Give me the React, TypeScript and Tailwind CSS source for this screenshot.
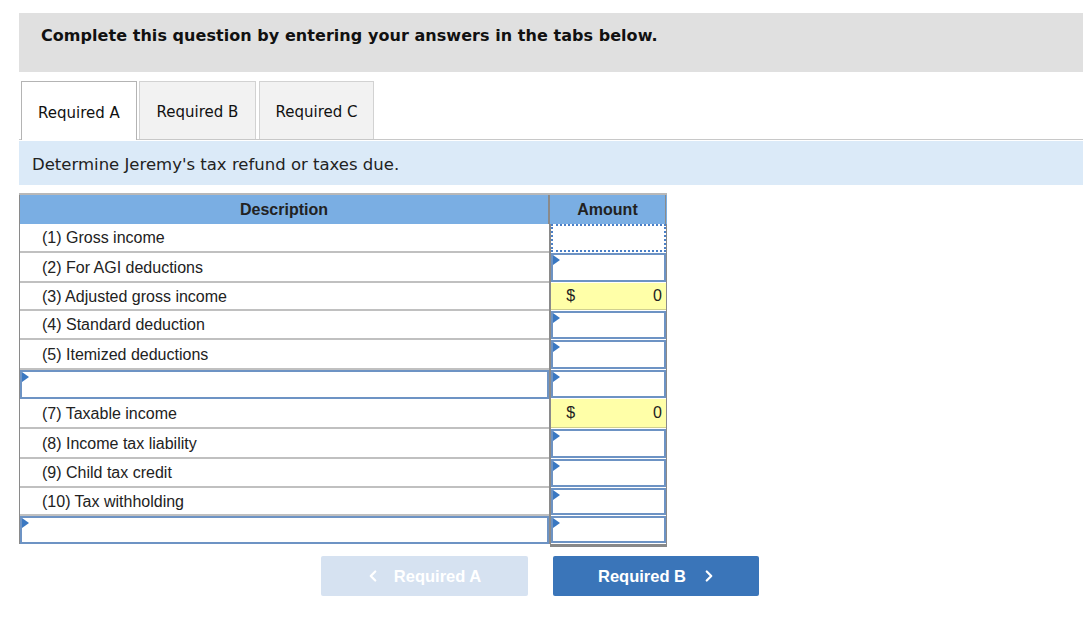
import React from "react";
import { ChevronLeft, ChevronRight } from "lucide-react";

type Row = { label?: string; amount: "input" | "focus" | "calc"; descInput?: boolean; h: string };

const rows: Row[] = [
  { label: "(1) Gross income", amount: "focus", h: "h-[29px]" },
  { label: "(2) For AGI deductions", amount: "input", h: "h-[30px]" },
  { label: "(3) Adjusted gross income", amount: "calc", h: "h-[28px]" },
  { label: "(4) Standard deduction", amount: "input", h: "h-[29px]" },
  { label: "(5) Itemized deductions", amount: "input", h: "h-[30px]" },
  { descInput: true, amount: "input", h: "h-[29px]" },
  { label: "(7) Taxable income", amount: "calc", h: "h-[30px]" },
  { label: "(8) Income tax liability", amount: "input", h: "h-[30px]" },
  { label: "(9) Child tax credit", amount: "input", h: "h-[29px]" },
  { label: "(10) Tax withholding", amount: "input", h: "h-[28px]" },
  { descInput: true, amount: "input", h: "h-[28px]" },
];

function Flag() {
  return <span className="absolute left-0 top-0 h-0 w-0 border-y-[5px] border-l-[7px] border-y-transparent border-l-[#3a78c2]" />;
}

function InputBox() {
  return (
    <div className="relative h-full w-full border-2 border-[#6d93c4] bg-white">
      <Flag />
    </div>
  );
}

function AmountCell({ kind }: { kind: Row["amount"] }) {
  if (kind === "focus") {
    return <div className="h-full w-full border-2 border-dotted border-[#4a7fc6] bg-white" />;
  }
  if (kind === "calc") {
    return (
      <div className="flex h-full w-full items-center justify-between border-b border-[#cfcf90] bg-[#ffffa8] pl-[15px] pr-[4px] text-[16px] text-[#222]">
        <span>$</span>
        <span>0</span>
      </div>
    );
  }
  return <InputBox />;
}

export default function App() {
  return (
    <div className="min-h-[623px] bg-white pt-[13px] pl-[19px] pr-[4px] font-['DejaVu_Sans',Verdana,sans-serif] text-[#111]">
      <div className="h-[59px] bg-[#e0e0e0] pl-[22px] pt-[11px] text-[16px] font-bold tracking-[0.05px]">
        Complete this question by entering your answers in the tabs below.
      </div>

      <div className="mt-[9px] flex h-[59px] items-end gap-[2px] border-b border-[#c8c8c8] pl-[2px]">
        <div className="-mb-px flex h-[59px] w-[116px] items-center justify-center border border-b-0 border-[#b4b4b4] bg-white pt-[4px] text-[15px]">
          Required A
        </div>
        <div className="flex h-[58px] w-[117px] items-center justify-center border border-b-0 border-[#d2d2d2] bg-[#f2f2f2] pt-[4px] text-[15px]">
          Required B
        </div>
        <div className="ml-[1px] flex h-[58px] w-[115px] items-center justify-center border border-b-0 border-[#d2d2d2] bg-[#f2f2f2] pt-[4px] text-[15px]">
          Required C
        </div>
      </div>

      <div className="mt-[1px] flex h-[44px] items-center bg-[#dbeaf8] pl-[13px] pt-[4px] text-[16.5px] text-[#222]">
        Determine Jeremy's tax refund or taxes due.
      </div>

      <div className="mt-[8px] w-[648px] font-['Liberation_Sans',Arial,sans-serif] text-[16px] text-[#222]">
        <div className="flex h-[31px] border-t-2 border-[#b8b8b8] bg-[#7aaee3] font-bold text-[#222]">
          <div className="flex w-[531px] items-center justify-center border-l border-r-2 border-[#8a8a8a]">Description</div>
          <div className="flex w-[116px] items-center justify-center border-r border-[#8a8a8a]">Amount</div>
        </div>
        {rows.map((r, i) => (
          <div key={i} className={`flex ${r.h} border-l border-[#8a8a8a]`}>
            <div className={`w-[530px] ${r.descInput ? "" : "border-b-2 border-[#c0c0c0]"}`}>
              {r.descInput ? (
                <InputBox />
              ) : (
                <div className="flex h-full items-center pl-[22px] pt-[1px]">{r.label}</div>
              )}
            </div>
            <div className="w-[118px] border-l-2 border-r border-[#8a8a8a] bg-white pb-[1px]">
              <AmountCell kind={r.amount} />
            </div>
          </div>
        ))}
        <div className="ml-[531px] h-[3px] w-[117px] bg-[#888]" />
      </div>

      <div className="mt-[9px] flex gap-[25px] pl-[302px] font-['Liberation_Sans',Arial,sans-serif] text-[16.5px] font-bold text-white">
        <div className="flex h-[40px] w-[207px] items-center justify-center gap-[12px] rounded-[2px] bg-[#d6e2f1] pr-[4px]">
          <ChevronLeft size={18} strokeWidth={3} />
          <span>Required A</span>
        </div>
        <div className="flex h-[40px] w-[206px] items-center justify-center gap-[14px] rounded-[2px] bg-[#3a75b9] pl-[4px]">
          <span>Required B</span>
          <ChevronRight size={18} strokeWidth={3} />
        </div>
      </div>
    </div>
  );
}
